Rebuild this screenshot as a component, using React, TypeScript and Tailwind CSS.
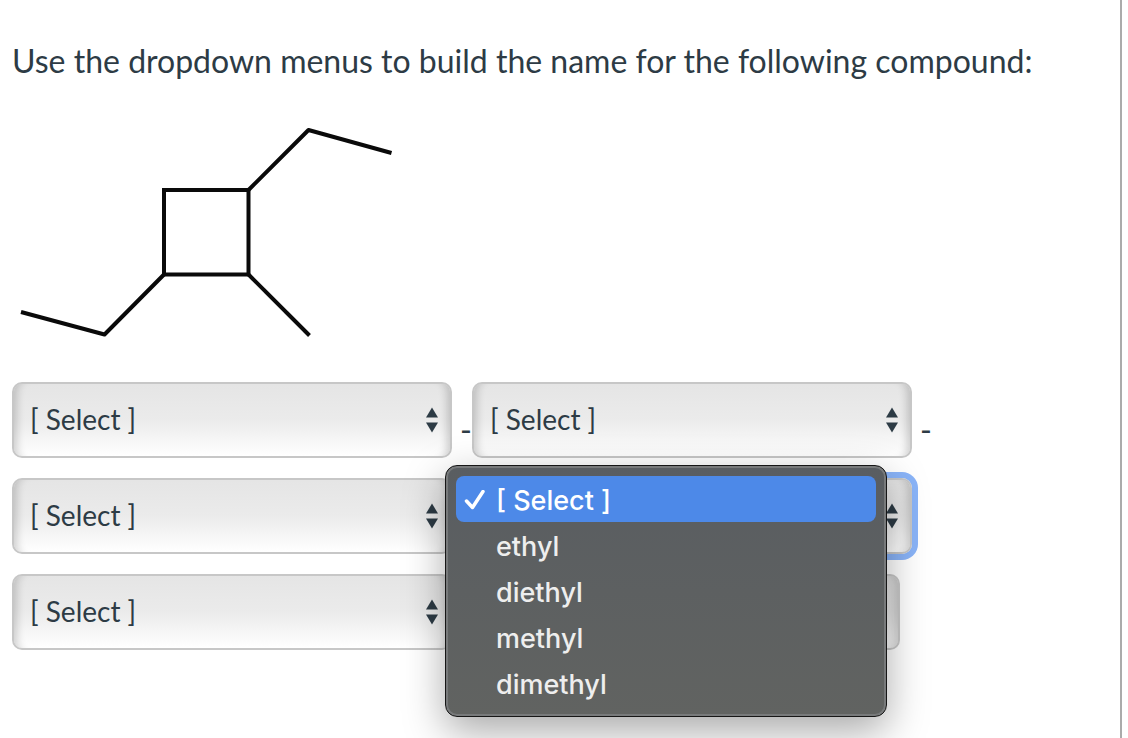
import { useState } from "react";

const PLACEHOLDER = "[ Select ]";
const SUBSTITUENTS = ["ethyl", "diethyl", "methyl", "dimethyl"];
const LOCANTS = ["1", "2", "3", "4", "1,2", "1,3"];
const PARENTS = ["cyclobutane", "cyclopentane", "butane"];

function Compound() {
  return (
    <svg
      role="img"
      aria-label="Skeletal structure of the compound"
      viewBox="0 0 400 232"
      className="h-58 w-100 max-w-full"
      fill="none"
      stroke="#0a0a0a"
      strokeWidth="4"
      strokeLinejoin="round"
    >
      <path d="M164 74H248.500V158.500H164Z" strokeLinejoin="miter" />
      <path d="M248.500 74L308.500 14L391.500 37" />
      <path d="M248.500 158.500L309.500 219.500" />
      <path d="M164 158.500L104.500 218.500L21 196" />
    </svg>
  );
}

type PickerProps = {
  label: string;
  options: string[];
  value?: string;
  onChange?: (value: string) => void;
  open?: boolean;
};

function Picker({ label, options, value, onChange, open = false }: PickerProps) {
  return (
    <div className="relative w-110 min-w-0">
      <select
        aria-label={label}
        defaultValue={onChange ? undefined : PLACEHOLDER}
        value={onChange ? value : undefined}
        onChange={onChange ? (e) => onChange(e.target.value) : undefined}
        className={`block h-19 w-full appearance-none rounded-[10px] border-2 border-[#c7c7c7] bg-linear-to-b from-[#e5e5e5] via-[#ebebeb] to-white pr-10 pb-0.5 pl-4 text-[28px] leading-9 text-[#2d3b45] shadow-[inset_11px_0_8px_-8px_rgba(0,0,0,0.18),inset_-11px_0_8px_-8px_rgba(0,0,0,0.18)] outline-none ${open ? "ring-6 ring-[#8ab4f8]" : ""}`}
      >
        <option>{PLACEHOLDER}</option>
        {options.map((o) => (
          <option key={o}>{o}</option>
        ))}
      </select>
      <svg
        aria-hidden="true"
        viewBox="0 0 12 26"
        className="pointer-events-none absolute inset-y-0 right-3.5 my-auto h-6.5 w-3"
        fill="#2d3b45"
      >
        <path d="M6 0.500L12 10.500H0Z" />
        <path d="M0 15.500H12L6 25.500Z" />
      </svg>
    </div>
  );
}

function Dash() {
  return <span className="ml-2 w-3 shrink-0 text-center text-[32px] leading-14">-</span>;
}

function Menu({ value, onPick }: { value: string; onPick: (value: string) => void }) {
  return (
    <div
      role="listbox"
      aria-label="Substituent choices"
      className="absolute -top-[13px] -left-[27px] z-10 flex w-[442px] flex-col rounded-xl border border-[#161616] bg-linear-to-b from-[#595d61] to-[#616361] p-2.5 shadow-[inset_0_0_0_2px_#787a7b,0_14px_40px_rgba(0,0,0,0.34)]"
    >
      {[PLACEHOLDER, ...SUBSTITUENTS].map((item) => {
        const selected = item === value;
        return (
          <button
            key={item}
            type="button"
            role="option"
            aria-selected={selected}
            onClick={() => onPick(item)}
            className={`flex h-11.5 items-center rounded-lg pt-1 pl-2 text-left font-['Inter',sans-serif] text-[27px] leading-8 font-medium ${selected ? "bg-[#4d89e8] text-white" : "text-[#eeeeee]"}`}
          >
            <span className="w-8 shrink-0">
              {selected && (
                <svg
                  aria-hidden="true"
                  viewBox="0 0 22 22"
                  className="size-5.5"
                  fill="none"
                  stroke="currentColor"
                  strokeWidth="3.500"
                  strokeLinecap="round"
                  strokeLinejoin="round"
                >
                  <path d="M2.500 11L8.500 17.500L19 1.500" />
                </svg>
              )}
            </span>
            {item}
          </button>
        );
      })}
    </div>
  );
}

export default function App() {
  const [substituent, setSubstituent] = useState(PLACEHOLDER);

  return (
    <main className="mr-1.5 min-h-screen border-r-2 border-[#ababab] bg-white pt-[37px] pl-3 font-['Lato',sans-serif] text-[#2d3b45]">
      <h1 className="text-[32px] leading-12">
        Use the dropdown menus to build the name for the following compound:
      </h1>
      <div className="-ml-3 pt-[31px] pb-[34px]">
        <Compound />
      </div>
      <form className="flex flex-col gap-5">
        <div className="flex items-end">
          <Picker label="First locant" options={LOCANTS} />
          <Dash />
          <Picker label="First substituent" options={SUBSTITUENTS} />
          <Dash />
        </div>
        <div className="flex items-end">
          <Picker label="Second locant" options={LOCANTS} />
          <Dash />
          <div className="relative w-110 min-w-0">
            <Picker
              label="Second substituent"
              options={SUBSTITUENTS}
              value={substituent}
              onChange={setSubstituent}
              open
            />
            <Menu value={substituent} onPick={setSubstituent} />
          </div>
        </div>
        <div className="flex items-end gap-2">
          <Picker label="Third substituent" options={SUBSTITUENTS} />
          <Picker label="Parent chain" options={PARENTS} />
        </div>
      </form>
    </main>
  );
}
